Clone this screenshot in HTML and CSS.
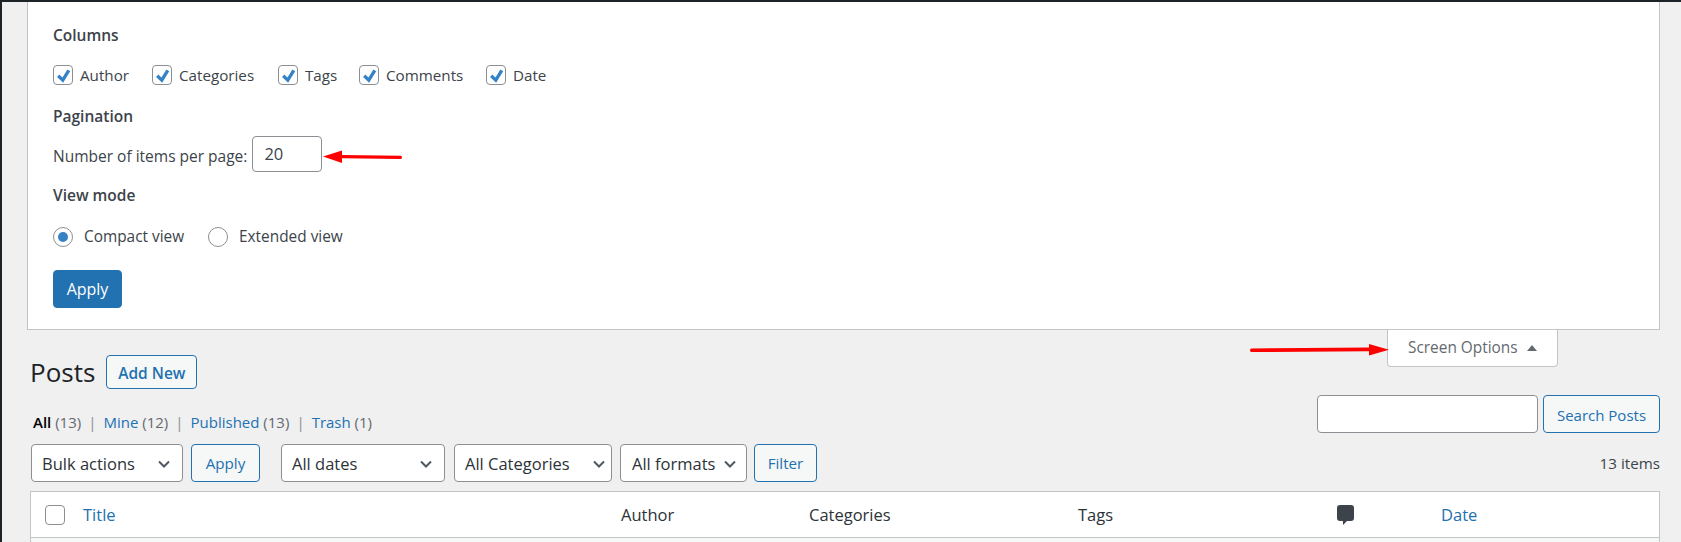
FILE: index.html
```html
<!DOCTYPE html>
<html lang="en">
<head>
<meta charset="utf-8">
<title>Posts</title>
<link rel="stylesheet" href="styles.css">
</head>
<body>
<svg width="0" height="0" class="defs"><defs>
  <symbol id="chk" viewBox="0 0 18 18"><path d="M4.200 9.800L8.800 14.200L14.800 4.300" fill="none" stroke="#3582c4" stroke-width="3.300"/></symbol>
  <symbol id="chev" viewBox="0 0 16 16"><path d="M3 5.500l5 5 5-5" fill="none" stroke="#50575e" stroke-width="2"/></symbol>
</defs></svg>
<i class="mark mark-a"></i><i class="mark mark-b"></i>
<div class="wrap">
  <section class="panel">
    <h5 class="legend">Columns</h5>
    <div class="checks">
      <label class="opt w-author"><span class="box"><svg><use href="#chk"/></svg></span>Author</label>
      <label class="opt w-cat"><span class="box"><svg><use href="#chk"/></svg></span>Categories</label>
      <label class="opt w-tags"><span class="box"><svg><use href="#chk"/></svg></span>Tags</label>
      <label class="opt w-com"><span class="box"><svg><use href="#chk"/></svg></span>Comments</label>
      <label class="opt"><span class="box"><svg><use href="#chk"/></svg></span>Date</label>
    </div>
    <h5 class="legend pag">Pagination</h5>
    <div class="perpage">
      <span class="perpage-label">Number of items per page:</span>
      <span class="num">20</span>
    </div>
    <h5 class="legend view">View mode</h5>
    <div class="radios">
      <label class="opt radio-a"><span class="radio on"></span>Compact view</label>
      <label class="opt"><span class="radio"></span>Extended view</label>
    </div>
    <button class="primary">Apply</button>
  </section>

  <div class="content">
    <div class="head-row">
      <div class="title-group">
        <h1>Posts</h1>
        <a class="btn add">Add New</a>
      </div>
      <div class="tab">Screen Options<i class="tri"></i></div>
    </div>
    <div class="sub-row">
      <ul class="subsub">
        <li><b>All</b> <span>(13)</span></li>
        <li class="sep">|</li>
        <li><a>Mine</a> <span>(12)</span></li>
        <li class="sep">|</li>
        <li><a>Published</a> <span>(13)</span></li>
        <li class="sep">|</li>
        <li><a>Trash</a> <span>(1)</span></li>
      </ul>
      <div class="search">
        <span class="field"></span>
        <a class="btn search-btn">Search Posts</a>
      </div>
    </div>
    <div class="tools">
      <div class="select s-bulk">Bulk actions<svg><use href="#chev"/></svg></div>
      <a class="btn b-apply">Apply</a>
      <div class="select s-date">All dates<svg><use href="#chev"/></svg></div>
      <div class="select s-cat">All Categories<svg><use href="#chev"/></svg></div>
      <div class="select s-fmt">All formats<svg><use href="#chev"/></svg></div>
      <a class="btn b-filter">Filter</a>
      <span class="count">13 items</span>
    </div>
    <div class="table">
      <div class="thead">
        <span class="c-cb"><span class="box"></span></span>
        <a>Title</a>
        <span>Author</span>
        <span>Categories</span>
        <span>Tags</span>
        <span class="c-com"><svg viewBox="0 0 17 20" width="17" height="20"><path d="M3 0h11a3 3 0 0 1 3 3v10a3 3 0 0 1-3 3h-4l-4 4v-4H3a3 3 0 0 1-3-3V3a3 3 0 0 1 3-3z" fill="#3c434a"/></svg></span>
        <a>Date</a>
      </div>
      <div class="row"></div>
    </div>
  </div>
</div>

<svg class="arrow arrow-a" width="80" height="14" viewBox="0 0 80 14"><path d="M0 6.500L19 .5v4.500l59 .7q2 1.500 0 3.300l-59-.8V13z" fill="#f00"/></svg>
<svg class="arrow arrow-b" width="140" height="14" viewBox="0 0 140 14"><path d="M1 5.500q-2 2 0 3.500l118-.7V12.500L139 6.800 119 1v3.500z" fill="#f00"/></svg>
</body>
</html>
```
FILE: styles.css
```css
* { box-sizing: border-box; }
html, body { margin: 0; height: 542px; overflow: hidden; }
body {
  position: relative;
  background: #f0f0f1;
  border-top: 2px solid #1d2327;
  border-left: 2px solid #1d2327;
  font-family: "Open Sans", "Noto Sans", sans-serif;
  font-size: 15.2px;
  line-height: 20px;
  color: #3c434a;
}
.defs { position: absolute; }
.mark { position: absolute; left: -2px; width: 2px; background: #2271b1; }
.mark-a { top: 72px; height: 13px; }
.mark-b { top: 101px; height: 13px; }
.wrap { padding-left: 25px; }

.panel {
  width: 1633px;
  height: 328px;
  background: #fff;
  border: 1px solid #c3c4c7;
  border-top: 0;
  padding: 23px 25px 0;
}
.legend { margin: 0; font-size: 15.500px; line-height: 20px; font-weight: 600; color: #3c434a; }
.checks { display: flex; margin-top: 20px; height: 20px; }
.opt { display: flex; align-items: center; }
.box {
  flex: none;
  width: 20px; height: 20px;
  margin-right: 7px;
  background: #fff;
  border: 1px solid #8c8f94;
  border-radius: 4px;
  display: block;
}
.box svg { display: block; width: 18px; height: 18px; }
.w-author { width: 99px; }
.w-cat { width: 126px; }
.w-tags { width: 81px; }
.w-com { width: 127px; }
.pag { margin-top: 21px; }
.perpage { display: flex; align-items: center; height: 36px; margin-top: 10px; }
.perpage-label { font-size: 15.500px; padding-top: 4px; }
.num {
  width: 70px; height: 36px;
  margin-left: 5px;
  padding: 0 11px;
  font-size: 16.500px;
  line-height: 34px;
  border: 1px solid #8c8f94;
  border-radius: 4px;
}
.view { margin-top: 13px; }
.radios { display: flex; margin-top: 22px; height: 20px; font-size: 15.400px; }
.radio {
  flex: none;
  width: 20px; height: 20px;
  margin-right: 11px;
  border: 1px solid #8c8f94;
  border-radius: 50%;
  background: #fff;
  display: flex; align-items: center; justify-content: center;
}
.radio.on::before { content: ""; width: 10px; height: 10px; border-radius: 50%; background: #3582c4; }
.radio-a { width: 155px; }
.primary {
  display: block;
  width: 69px; height: 38px;
  margin-top: 23px;
  padding: 0;
  font: inherit;
  font-size: 16px;
  color: #fff;
  background: #2271b1;
  border: 1px solid #2271b1;
  border-radius: 4px;
}

.content { width: 1633px; padding-left: 3px; }
.head-row { display: flex; justify-content: space-between; align-items: flex-start; height: 60px; }
.title-group { display: flex; align-items: center; margin-top: 25px; }
h1 { margin: 0; font-size: 26px; line-height: 34px; font-weight: 400; color: #1d2327; }
.btn {
  display: flex; align-items: center; justify-content: center;
  color: #2271b1;
  background: #f6f7f7;
  border: 1px solid #2271b1;
  border-radius: 4px;
}
.add { width: 91px; height: 34px; margin-left: 11px; padding-top: 1px; font-weight: 600; font-size: 15.500px; }
.tab {
  display: flex; align-items: center;
  width: 171px; height: 37px;
  margin-right: 102px;
  padding: 0 0 1px 20px;
  font-size: 15.400px;
  color: #646970;
  background: #fff;
  border: 1px solid #c3c4c7;
  border-top: 0;
  border-radius: 0 0 4px 4px;
}
.tri {
  width: 0; height: 0;
  margin-left: 9px;
  border: 5px solid transparent;
  border-top: 0;
  border-bottom: 6px solid #646970;
}
.sub-row { display: flex; justify-content: space-between; align-items: flex-start; height: 54px; }
.subsub { display: flex; margin: 22px 0 0 3px; padding: 0; list-style: none; color: #646970; font-size: 15px; }
.subsub li { white-space: pre; }
.subsub b { color: #000; font-weight: 600; }
.subsub a { color: #2271b1; }
.sep { margin: 0 7px; color: #8c8f94; }
.search { display: flex; gap: 5px; margin-top: 5px; }
.field { display: block; width: 221px; height: 38px; background: #fff; border: 1px solid #8c8f94; border-radius: 4px; }
.search-btn { width: 117px; height: 38px; padding-top: 1px; font-size: 15px; }
.tools { display: flex; align-items: center; height: 38px; margin-left: 1px; }
.select {
  display: flex; align-items: center; justify-content: space-between;
  height: 38px;
  padding: 1px 10px 0 10px;
  font-size: 16.500px;
  color: #2c3338;
  background: #fff;
  border: 1px solid #8c8f94;
  border-radius: 4px;
}
.select svg { flex: none; width: 16px; height: 16px; }
.s-bulk { width: 152px; }
.b-apply { width: 69px; height: 38px; margin-left: 8px; }
.s-date { width: 164px; margin-left: 21px; }
.s-cat { width: 158px; margin-left: 9px; padding-right: 4px; }
.s-fmt { width: 127px; margin-left: 8px; padding-left: 11px; padding-right: 8px; }
.b-filter { width: 63px; height: 38px; margin-left: 7px; }
.count { margin-left: auto; }

.table { margin-top: 9px; background: #fff; border: 1px solid #c3c4c7; }
.thead {
  display: grid;
  grid-template-columns: 52px 538px 188px 269px 259px 104px 1fr;
  align-items: center;
  height: 46px;
  font-size: 16.500px;
  color: #2c3338;
  border-bottom: 1px solid #c3c4c7;
}
.thead a { color: #2271b1; }
.c-cb { padding-left: 14px; }
.c-cb .box { margin: 0; }
.c-com { display: flex; }
.row { height: 10px; background: #f6f7f7; }

.arrow { position: absolute; }
.arrow-a { left: 321px; top: 148px; }
.arrow-b { left: 1248px; top: 341px; }
```
